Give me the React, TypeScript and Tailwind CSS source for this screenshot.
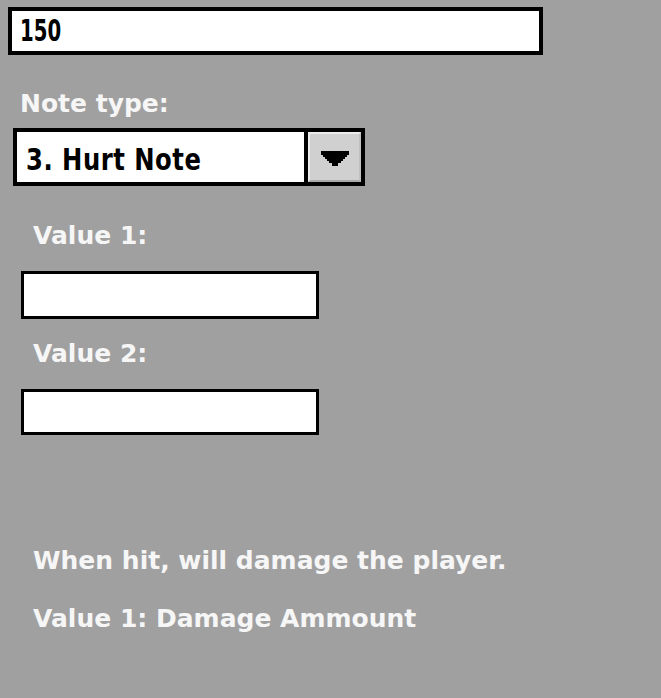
import React from "react";

const label = "block text-[25px] leading-[24px] font-bold text-[#f6f6f6]";
const narrow = { fontFamily: '"DejaVu Sans Condensed", "DejaVu Sans", sans-serif' };

const Field = ({ h }: { h: string }) => (
    <div className={`ml-[21px] w-[298px] ${h} border-[3px] border-black bg-white`} />
);

export default function App() {
    return (
        <div
            className="min-h-screen bg-[#a0a0a0] pt-[7px]"
            style={{ fontFamily: '"DejaVu Sans", "Liberation Sans", sans-serif' }}
        >
            <div className="ml-[8px] flex h-[48px] w-[535px] items-center border-4 border-black bg-white pl-[8px]">
                <span className="inline-block origin-left scale-x-[0.73] text-[30px] leading-none font-bold text-black" style={narrow}>
                    150
                </span>
            </div>

            <span className={`${label} mt-[37px] ml-[20px]`}>Note type:</span>

            <div className="mt-[12px] ml-[13px] flex h-[58px] w-[352px] border-4 border-black">
                <div className="flex w-[287px] items-center bg-white pt-[4px] pl-[9px]">
                    <span className="inline-block origin-left scale-y-[1.12] text-[27px] leading-none font-bold tracking-[0.5px] text-black" style={narrow}>
                        3. Hurt Note
                    </span>
                </div>
                <div className="flex flex-1 items-center justify-center border-l-4 border-black">
                    <div className="flex h-full w-full items-center justify-center border-t-2 border-l-2 border-t-[#ececec] border-l-[#ececec] border-b-2 border-r-2 border-b-[#a8a8a8] border-r-[#c0c0c0] bg-[#d0d0d0] pt-[2px]">
                        <svg width="28" height="15" viewBox="0 0 28 15" shapeRendering="crispEdges">
                            <path d="M0 0H28V4H26V6H24V8H22V10H20V12H17V15H11V12H8V10H6V8H4V6H2V4H0Z" fill="#000" />
                        </svg>
                    </div>
                </div>
            </div>

            <span className={`${label} mt-[38px] ml-[33px]`}>Value 1:</span>
            <div className="mt-[23px]">
                <Field h="h-[48px]" />
            </div>

            <span className={`${label} mt-[23px] ml-[33px]`}>Value 2:</span>
            <div className="mt-[23px]">
                <Field h="h-[46px]" />
            </div>

            <span className={`${label} mt-[114px] ml-[33px]`}>When hit, will damage the player.</span>
            <span className={`${label} mt-[34px] ml-[33px]`}>Value 1: Damage Ammount</span>
        </div>
    );
}
